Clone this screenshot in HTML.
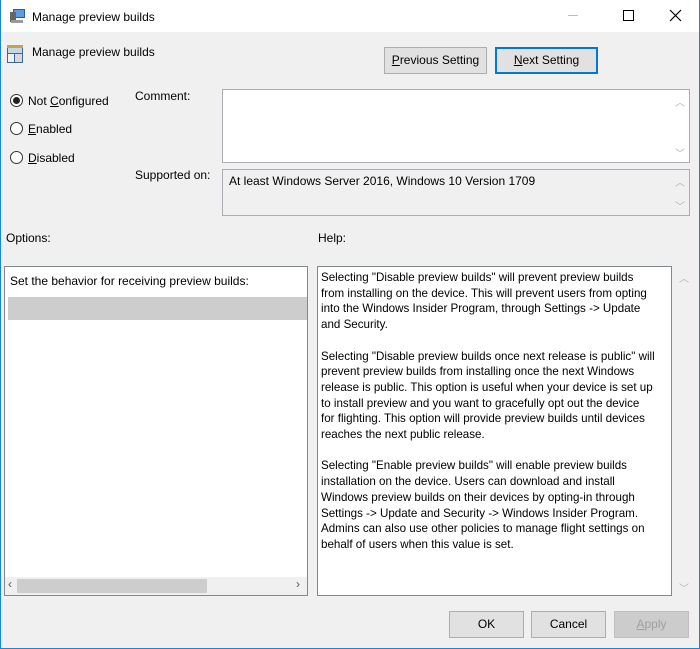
<!DOCTYPE html>
<html><head><meta charset="utf-8"><style>
*{margin:0;padding:0;box-sizing:border-box}
body{width:700px;height:649px;overflow:hidden;background:#f0f0f0;font-family:"Liberation Sans",sans-serif;font-size:12px;color:#000;position:relative}
.a{position:absolute}
.win{left:0;top:0;width:700px;height:649px;border:1px solid #1c86d6;border-top:none}
.title{left:0;top:0;width:700px;height:32px;background:#fff}
.btn{position:absolute;background:#e1e1e1;border:1px solid #adadad;text-align:center;line-height:24px;font-size:12px}
.rad{position:absolute;width:13px;height:13px;border:1px solid #333;border-radius:50%;background:#fff}
.box{position:absolute;background:#fff;border:1px solid #828790}
.arr{position:absolute;color:#b0b0b0;font-size:10px}
.help{left:321px;top:270px;line-height:15.7px;font-size:11.6px;white-space:pre}
</style></head><body>
<div class="a title"></div>
<div class="a win"></div>
<svg class="a" style="left:9px;top:8px" width="17" height="16"><rect x="4" y="1" width="12" height="9" fill="#2a5aa8"/><rect x="5" y="2" width="10" height="7" fill="#5b9be0"/><rect x="1" y="4" width="6" height="10" fill="#666"/><rect x="2" y="12" width="12" height="3" fill="#999"/></svg>
<div class="a" style="left:32px;top:10px">Manage preview builds</div>
<div class="a" style="left:623px;top:10px;width:11px;height:11px;border:1px solid #000"></div>
<svg class="a" style="left:669px;top:9px" width="13" height="13"><path d="M1 1L12 12M12 1L1 12" stroke="#000" stroke-width="1.2"/></svg>
<div class="a" style="left:568px;top:15px;width:10px;height:1px;background:#bbb"></div>
<svg class="a" style="left:7px;top:45px" width="16" height="18"><rect x="0" y="0" width="16" height="18" fill="#3d6a9a"/><rect x="1" y="3" width="14" height="5" fill="#c7d6e6"/><rect x="1" y="9" width="6" height="8" fill="#f0f0f0"/><rect x="8" y="9" width="7" height="8" fill="#d8d8d8"/><rect x="0" y="0" width="16" height="3" fill="#c8a050"/></svg>
<div class="a" style="left:32px;top:45px">Manage preview builds</div>
<div class="btn" style="left:384px;top:47px;width:103px;height:27px"><u>P</u>revious Setting</div>
<div class="btn" style="left:495px;top:47px;width:103px;height:27px;border:2px solid #0078d7;line-height:22px"><u>N</u>ext Setting</div>
<div class="rad" style="left:10px;top:94px"></div><div class="a" style="left:13px;top:97px;width:7px;height:7px;border-radius:50%;background:#222"></div>
<div class="a" style="left:28px;top:94px">Not <u>C</u>onfigured</div>
<div class="rad" style="left:10px;top:122px"></div><div class="a" style="left:28px;top:122px"><u>E</u>nabled</div>
<div class="rad" style="left:10px;top:151px"></div><div class="a" style="left:28px;top:151px"><u>D</u>isabled</div>
<div class="a" style="left:135px;top:89px">Comment:</div>
<div class="box" style="left:222px;top:89px;width:468px;height:74px;border-color:#abadb3"></div>
<div class="arr" style="left:675px;top:94px">︿</div><div class="arr" style="left:675px;top:145px">﹀</div>
<div class="a" style="left:135px;top:168px">Supported on:</div>
<div class="box" style="left:222px;top:169px;width:468px;height:47px;background:#f0f0f0;border-color:#abadb3"></div>
<div class="a" style="left:229px;top:174px">At least Windows Server 2016, Windows 10 Version 1709</div>
<div class="arr" style="left:675px;top:174px">︿</div><div class="arr" style="left:675px;top:198px">﹀</div>
<div class="a" style="left:6px;top:231px">Options:</div>
<div class="a" style="left:318px;top:231px">Help:</div>
<div class="box" style="left:4px;top:266px;width:304px;height:330px"></div>
<div class="a" style="left:10px;top:274px">Set the behavior for receiving preview builds:</div>
<div class="a" style="left:8px;top:297px;width:299px;height:23px;background:#cdcdcd"></div>
<div class="a" style="left:5px;top:577px;width:302px;height:18px;background:#f0f0f0"></div>
<div class="a" style="left:17px;top:579px;width:190px;height:14px;background:#cdcdcd"></div>
<div class="a" style="left:8px;top:577px;font-size:12px;color:#555">‹</div>
<div class="a" style="left:296px;top:577px;font-size:12px;color:#555">›</div>
<div class="box" style="left:317px;top:266px;width:355px;height:330px"></div>
<div class="a help">Selecting "Disable preview builds" will prevent preview builds
from installing on the device. This will prevent users from opting
into the Windows Insider Program, through Settings -&gt; Update
and Security.

Selecting "Disable preview builds once next release is public" will
prevent preview builds from installing once the next Windows
release is public. This option is useful when your device is set up
to install preview and you want to gracefully opt out the device
for flighting. This option will provide preview builds until devices
reaches the next public release.

Selecting "Enable preview builds" will enable preview builds
installation on the device. Users can download and install
Windows preview builds on their devices by opting-in through
Settings -&gt; Update and Security -&gt; Windows Insider Program.
Admins can also use other policies to manage flight settings on
behalf of users when this value is set.</div>
<div class="arr" style="left:679px;top:270px">︿</div><div class="arr" style="left:679px;top:580px">﹀</div>
<div class="btn" style="left:449px;top:611px;width:75px;height:27px">OK</div>
<div class="btn" style="left:531px;top:611px;width:75px;height:27px">Cancel</div>
<div class="btn" style="left:614px;top:611px;width:75px;height:27px;background:#cccccc;border-color:#bfbfbf;color:#a0a0a0"><u>A</u>pply</div>
</body></html>
